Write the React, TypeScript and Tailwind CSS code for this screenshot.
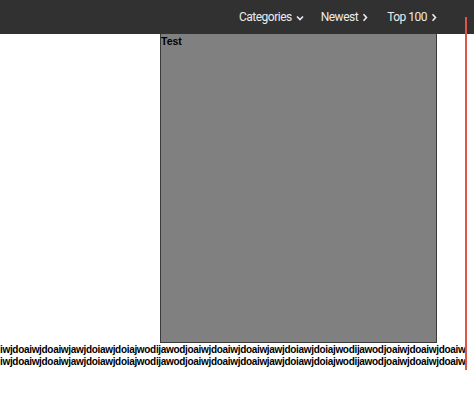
import React from "react";

const ChevronDown = () => (
  <svg width="8" height="6" viewBox="0 0 8 6" fill="none" className="ml-[4px] mt-[1px]">
    <path d="M1 1.5 L4 4.5 L7 1.5" stroke="#ececec" strokeWidth="1.6" />
  </svg>
);

const ChevronRight = () => (
  <svg width="6" height="9" viewBox="0 0 6 9" fill="none" className="ml-[4px] mt-[1px]">
    <path d="M1.5 1.2 L4.5 4.5 L1.5 7.8" stroke="#ececec" strokeWidth="1.6" />
  </svg>
);

const line =
  "iwjdoaiwjdoaiwjawjdoiawjdoiajwodijawodjoaiwjdoaiwjdoaiwjawjdoiawjdoiajwodijawodjoaiwjdoaiwjdoaiwjawjdoiawjdoiajwodijawodjo";

export default function App() {
  return (
    <div className="relative h-[408px] w-[474px] bg-white">
      <header className="flex h-[34px] items-center justify-end bg-[#313131] pr-[37px] font-['Roboto',sans-serif] text-[12px] tracking-[-0.5px] text-[#ececec]">
        <div className="flex items-center">
          <span>Categories</span>
          <ChevronDown />
        </div>
        <div className="ml-[17px] flex items-center">
          <span>Newest</span>
          <ChevronRight />
        </div>
        <div className="ml-[19px] flex items-center">
          <span>Top 100</span>
          <ChevronRight />
        </div>
      </header>
      <main className="flex flex-col">
        <div className="ml-[160px] h-[309px] w-[277px] border border-t-0 border-[#3a3a3a] bg-[#808080] font-['Liberation_Sans',Arial,sans-serif] text-[10.5px] font-bold leading-[15px] text-black">
          Test
        </div>
        <div className="w-[465px] overflow-hidden whitespace-nowrap pt-[1px] font-['Liberation_Sans',Arial,sans-serif] text-[10px] font-bold leading-[12px] tracking-[-0.32px] text-black">
          <div>{line}</div>
          <div>{line}</div>
        </div>
      </main>
      <div className="absolute left-[465px] top-[17px] h-[353px] w-[2px] bg-[#e0524a]" />
    </div>
  );
}
